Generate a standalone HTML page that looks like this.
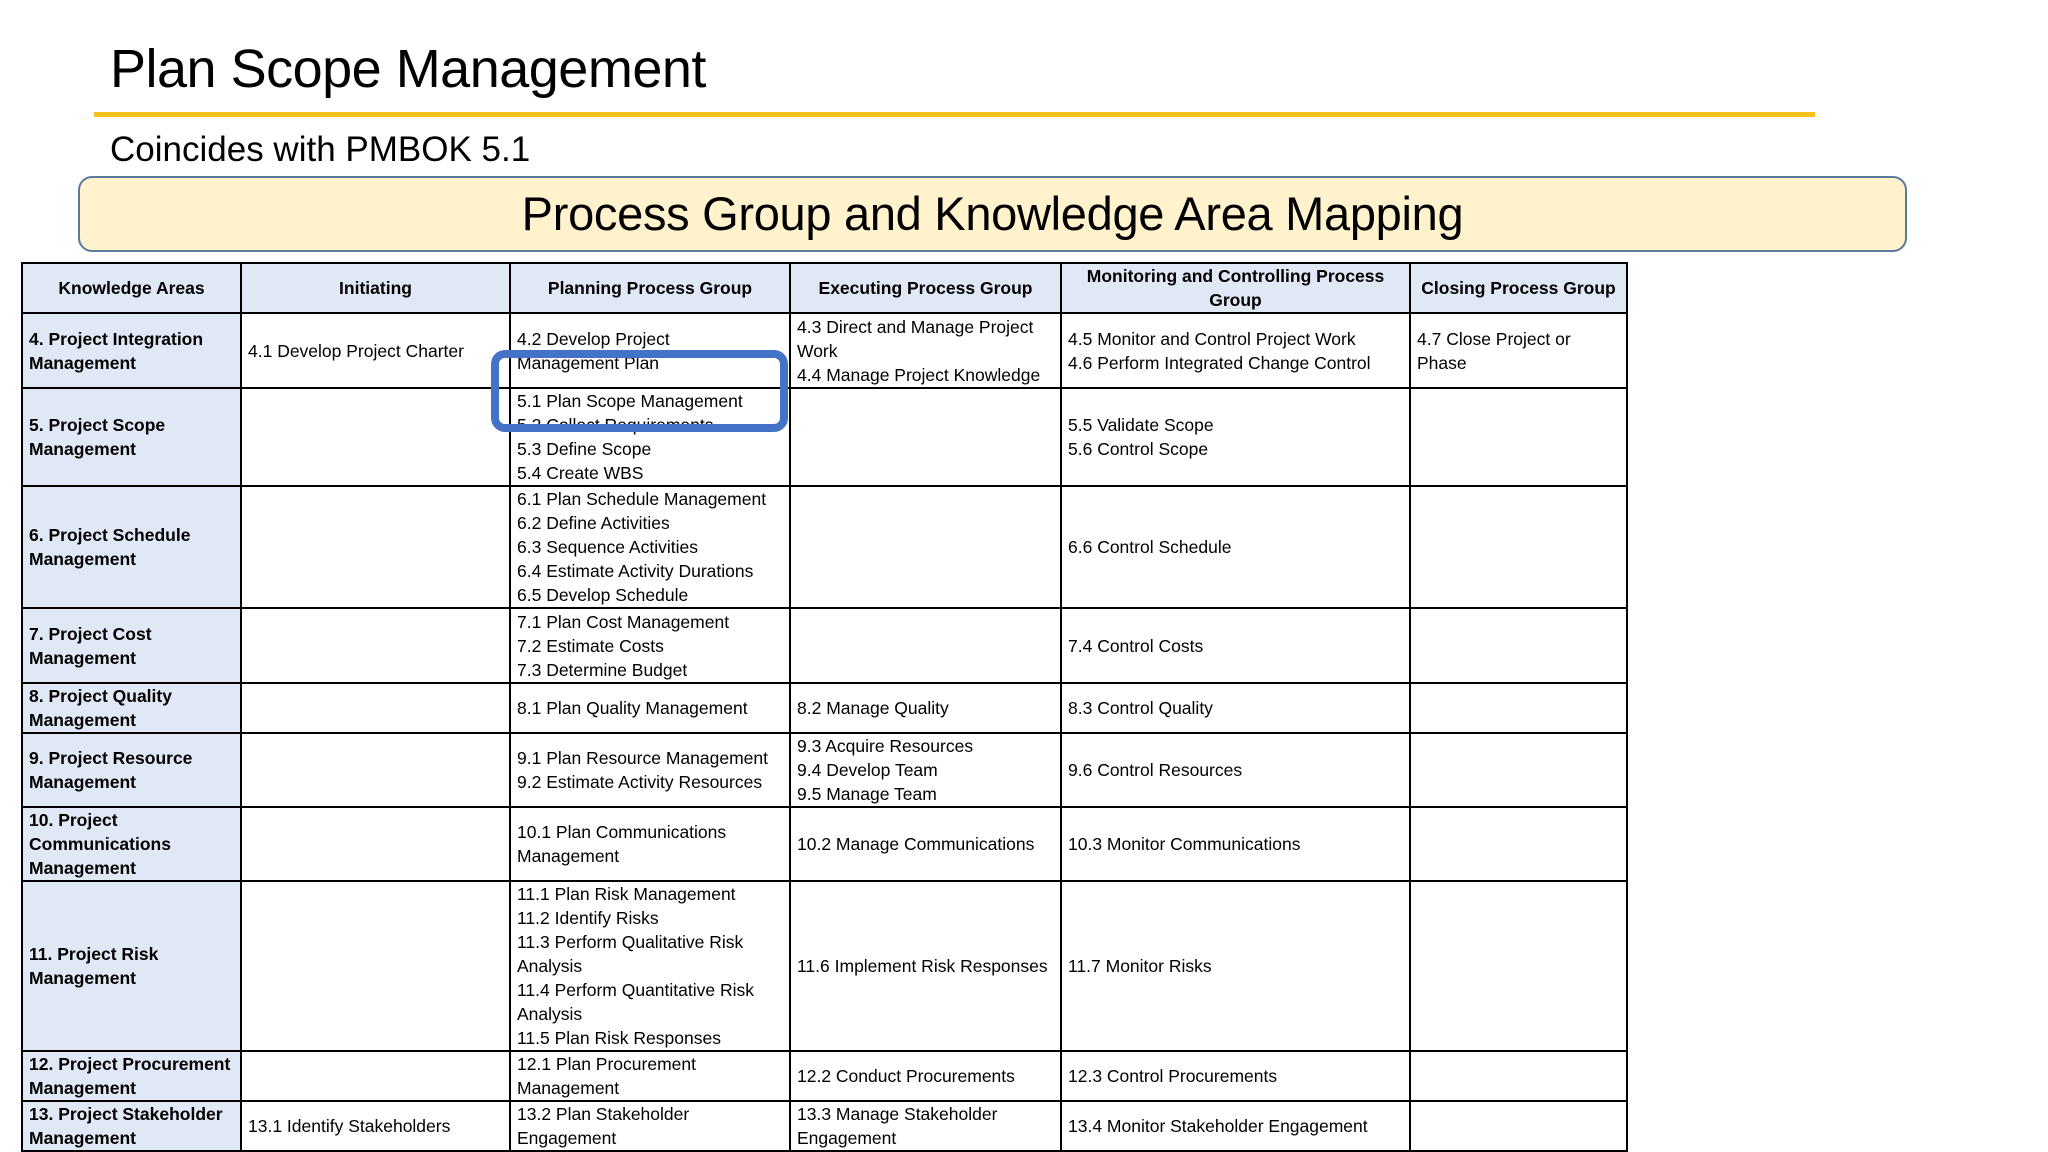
<!DOCTYPE html>
<html><head><meta charset="utf-8"><style>
*{margin:0;padding:0;box-sizing:border-box}
body{width:2048px;height:1152px;overflow:hidden;background:#fff;position:relative;font-family:"Liberation Sans",Arial,sans-serif;color:#000}
.t{position:absolute;left:110px;top:38px;font-size:54px;white-space:nowrap;letter-spacing:-0.5px}
.line{position:absolute;left:94px;top:112px;width:1721px;height:5px;background:#f6c01a}
.s{position:absolute;left:110px;top:130px;font-size:35px;white-space:nowrap}
.box{position:absolute;left:78px;top:176px;width:1829px;height:76px;background:#fff2cc;border:2px solid #5a7a9c;border-radius:14px;text-align:center;font-size:47px;line-height:71px;letter-spacing:-0.3px}
table{position:absolute;left:21px;top:262px;border-collapse:collapse;table-layout:fixed;font-size:17.5px;line-height:24px}
td{border:2px solid #000;vertical-align:middle;padding:0 6px;overflow:hidden;white-space:nowrap}
tr.h td{background:#dfe8f4;font-weight:bold;text-align:center;white-space:normal}
td.k{background:#dfe8f4;font-weight:bold;white-space:normal}
.hl{position:absolute;left:491px;top:350px;width:297px;height:82px;border:8px solid #4472c4;border-radius:14px}
</style></head><body>
<div class="t">Plan Scope Management</div>
<div class="line"></div>
<div class="s">Coincides with PMBOK 5.1</div>
<div class="box">Process Group and Knowledge Area Mapping</div>
<table>
<colgroup><col style="width:219px"><col style="width:269px"><col style="width:280px"><col style="width:271px"><col style="width:349px"><col style="width:217px"></colgroup>
<tr class="h" style="height:50px"><td>Knowledge Areas</td><td>Initiating</td><td>Planning Process Group</td><td>Executing Process Group</td><td>Monitoring and Controlling Process Group</td><td>Closing Process Group</td></tr>
<tr style="height:75px"><td class="k">4. Project Integration Management</td><td>4.1 Develop Project Charter</td><td>4.2 Develop Project<br>Management Plan</td><td>4.3 Direct and Manage Project<br>Work<br>4.4 Manage Project Knowledge</td><td>4.5 Monitor and Control Project Work<br>4.6 Perform Integrated Change Control</td><td>4.7 Close Project or<br>Phase</td></tr>
<tr style="height:98px"><td class="k">5. Project Scope Management</td><td></td><td>5.1 Plan Scope Management<br>5.2 Collect Requirements<br>5.3 Define Scope<br>5.4 Create WBS</td><td></td><td>5.5 Validate Scope<br>5.6 Control Scope</td><td></td></tr>
<tr style="height:122px"><td class="k">6. Project Schedule Management</td><td></td><td>6.1 Plan Schedule Management<br>6.2 Define Activities<br>6.3 Sequence Activities<br>6.4 Estimate Activity Durations<br>6.5 Develop Schedule</td><td></td><td>6.6 Control Schedule</td><td></td></tr>
<tr style="height:75px"><td class="k">7. Project Cost Management</td><td></td><td>7.1 Plan Cost Management<br>7.2 Estimate Costs<br>7.3 Determine Budget</td><td></td><td>7.4 Control Costs</td><td></td></tr>
<tr style="height:48px"><td class="k">8. Project Quality Management</td><td></td><td>8.1 Plan Quality Management</td><td>8.2 Manage Quality</td><td>8.3 Control Quality</td><td></td></tr>
<tr style="height:74px"><td class="k">9. Project Resource Management</td><td></td><td>9.1 Plan Resource Management<br>9.2 Estimate Activity Resources</td><td>9.3 Acquire Resources<br>9.4 Develop Team<br>9.5 Manage Team</td><td>9.6 Control Resources</td><td></td></tr>
<tr style="height:74px"><td class="k">10. Project Communications Management</td><td></td><td>10.1 Plan Communications<br>Management</td><td>10.2 Manage Communications</td><td>10.3 Monitor Communications</td><td></td></tr>
<tr style="height:170px"><td class="k">11. Project Risk Management</td><td></td><td>11.1 Plan Risk Management<br>11.2 Identify Risks<br>11.3 Perform Qualitative Risk<br>Analysis<br>11.4 Perform Quantitative Risk<br>Analysis<br>11.5 Plan Risk Responses</td><td>11.6 Implement Risk Responses</td><td>11.7 Monitor Risks</td><td></td></tr>
<tr style="height:49px"><td class="k">12. Project Procurement Management</td><td></td><td>12.1 Plan Procurement<br>Management</td><td>12.2 Conduct Procurements</td><td>12.3 Control Procurements</td><td></td></tr>
<tr style="height:49px"><td class="k">13. Project Stakeholder Management</td><td>13.1 Identify Stakeholders</td><td>13.2 Plan Stakeholder<br>Engagement</td><td>13.3 Manage Stakeholder<br>Engagement</td><td>13.4 Monitor Stakeholder Engagement</td><td></td></tr>
</table>
<div class="hl"></div>
</body></html>
